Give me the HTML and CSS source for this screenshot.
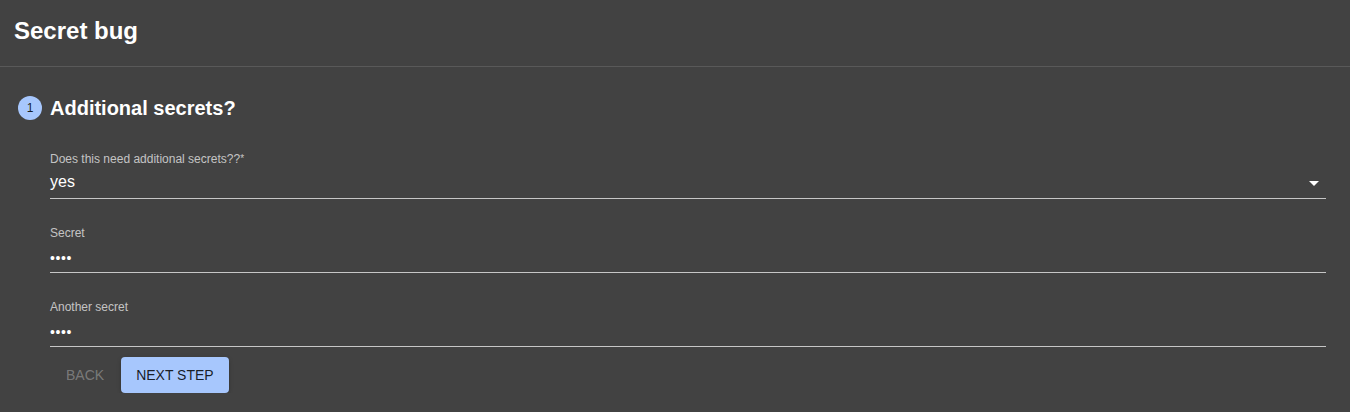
FILE: index.html
```html
<!DOCTYPE html>
<html lang="en">
<head>
<meta charset="utf-8">
<title>Secret bug</title>
<link rel="stylesheet" href="styles.css">
</head>
<body>
<header class="app-header">
  <h1 class="app-title">Secret bug</h1>
</header>
<main class="stepper">
  <div class="step-head">
    <span class="step-icon">1</span>
    <h2 class="step-title">Additional secrets?</h2>
  </div>
  <div class="step-body">
    <div class="field">
      <label class="field-label">Does this need additional secrets??<span class="req">*</span></label>
      <div class="field-input select">
        <span class="value">yes</span>
        <svg class="arrow" viewBox="0 0 24 24" width="24" height="24" aria-hidden="true"><path d="M7 10l5 5 5-5z" fill="#fff"/></svg>
      </div>
    </div>
    <div class="field">
      <label class="field-label">Secret</label>
      <div class="field-input"><span class="value dots">••••</span></div>
    </div>
    <div class="field">
      <label class="field-label">Another secret</label>
      <div class="field-input"><span class="value dots">••••</span></div>
    </div>
    <div class="actions">
      <button class="btn btn-text" disabled>BACK</button>
      <button class="btn btn-contained">NEXT STEP</button>
    </div>
  </div>
</main>
</body>
</html>
```
FILE: styles.css
```css
html, body {
  margin: 0;
  padding: 0;
  background: #424242;
  font-family: "Liberation Sans", Arial, sans-serif;
  color: #fff;
}

.app-header {
  height: 66px;
  box-sizing: border-box;
  padding: 17px 14px 21px;
  border-bottom: 1px solid rgba(255, 255, 255, 0.12);
  box-sizing: content-box;
  height: 28px;
}

.app-title {
  margin: 0;
  font-size: 24px;
  line-height: 28px;
  font-weight: 700;
}

.stepper {
  padding: 29px 24px 0 18px;
}

.step-head {
  display: flex;
  align-items: center;
  gap: 8px;
  height: 24px;
}

.step-icon {
  width: 24px;
  height: 24px;
  border-radius: 50%;
  background: #a7c7fd;
  color: rgba(0, 0, 0, 0.87);
  font-size: 12px;
  line-height: 24px;
  text-align: center;
  flex: none;
}

.step-title {
  margin: 0;
  font-size: 20px;
  line-height: 24px;
  font-weight: 700;
}

.step-body {
  padding-left: 32px;
  padding-top: 32px;
  display: flex;
  flex-direction: column;
}

.field + .field {
  margin-top: 27px;
}

.field-label {
  display: block;
  font-size: 12px;
  line-height: 14px;
  color: rgba(255, 255, 255, 0.7);
}

.req {
  font-size: 10px;
  vertical-align: top;
}

.field-input {
  position: relative;
  margin-top: 4px;
  padding-bottom: 4px;
  height: 24px;
  border-bottom: 1px solid rgba(255, 255, 255, 0.7);
  font-size: 16px;
  line-height: 24px;
}

.value {
  display: block;
}

.dots {
  font-size: 14px;
  line-height: 28px;
  letter-spacing: 0.6px;
}

.arrow {
  position: absolute;
  right: 0;
  top: 1px;
}

.actions {
  display: flex;
  gap: 1px;
  margin-top: 10px;
}

.btn {
  height: 36px;
  font-family: "Liberation Sans", Arial, sans-serif;
  font-size: 14px;
  line-height: 36px;
  border: 0;
  border-radius: 4px;
  padding: 0 15px;
  cursor: pointer;
}

.btn-text {
  background: transparent;
  color: rgba(255, 255, 255, 0.3);
  padding: 0 16px;
}

.btn-contained {
  background: #a7c7fd;
  color: rgba(0, 0, 0, 0.87);
  box-shadow: 0 3px 1px -2px rgba(0, 0, 0, 0.2), 0 2px 2px 0 rgba(0, 0, 0, 0.14), 0 1px 5px 0 rgba(0, 0, 0, 0.12);
}
```
